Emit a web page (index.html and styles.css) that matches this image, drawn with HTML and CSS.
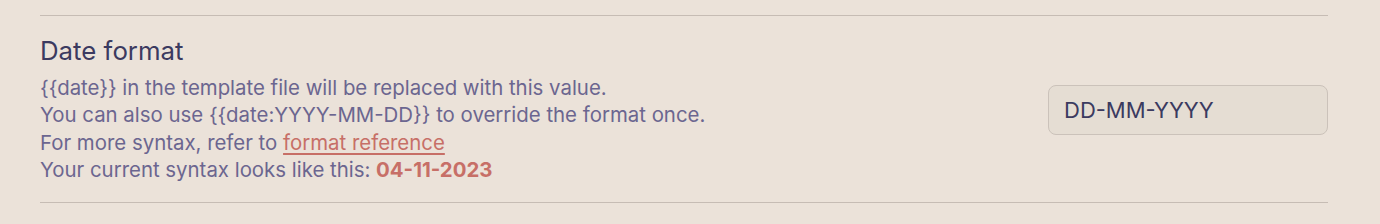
FILE: index.html
```html
<!DOCTYPE html>
<html>
	<head>
		<meta charset="UTF-8">
		<title>Settings</title>
		<link rel="stylesheet" href="styles.css">
	</head>
	<body>
		<div class="setting">
			<div class="info">
				<div class="name">Date format</div>
				<div class="desc">
					<div>{{date}} in the template file will be replaced with this value.</div>
					<div>You can also use {{date:YYYY-MM-DD}} to override the format once.</div>
					<div>For more syntax, refer to <a href="javascript:;">format reference</a></div>
					<div>Your current syntax looks like this: <b>04-11-2023</b></div>
				</div>
			</div>
			<div class="control">
				<input type="text" value="DD-MM-YYYY">
			</div>
		</div>
	</body>
</html>
```

FILE: styles.css
```css
*{ margin: 0; padding: 0; box-sizing: border-box;}
body{ background: #ebe2d9; font-family: Inter, "Noto Sans", sans-serif; width: 1380px; height: 224px; overflow: hidden;}
.setting{ margin: 15px 52px 0 40px; border-top: 1px solid #c6bcb4; border-bottom: 1px solid #c6bcb4; padding: 20px 0 19px; display: flex; align-items: center; justify-content: space-between;}
.name{ font-size: 25.8px; color: #3b3a60; line-height: 30px; margin-bottom: 8px;}
.desc{ font-size: 20.4px; color: #6b6690; line-height: 27.3px;}
.desc a{ color: #c76f67; text-decoration: underline; text-underline-offset: 3px;}
.desc b{ color: #c76f67; font-weight: 700;}
.control input{ width: 280px; height: 50px; border: 1px solid #cbc2ba; border-radius: 8px; background: #e5ddd3; font-family: inherit; font-size: 22px; color: #3b3a60; padding: 0 15px; outline: none;}
```
